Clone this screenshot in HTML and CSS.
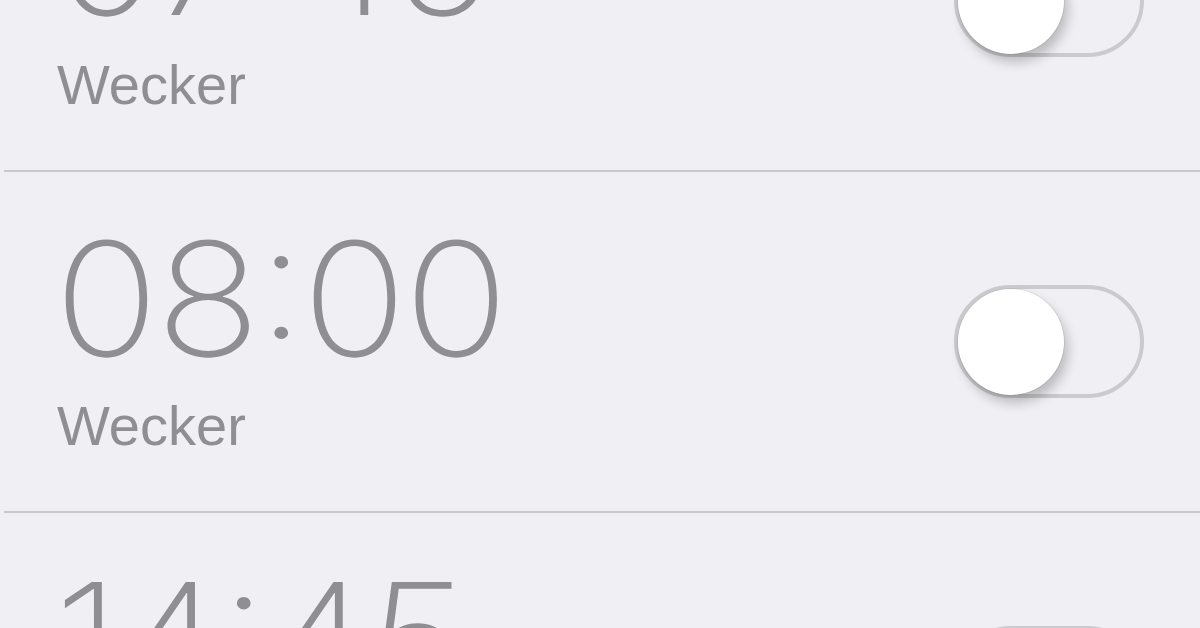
FILE: index.html
```html
<!DOCTYPE html>
<html lang="de">

<head>
    <meta charset="UTF-8">
    <meta name="viewport" content="width=device-width, initial-scale=1.0">
    <title>Wecker</title>
    <link rel="stylesheet" href="styles.css">
</head>

<body>
    <main class="alarms">
        <ul class="alarm-list">
            <li class="alarm">
                <div class="alarm_info">
                    <p class="alarm_time">07<span class="alarm_colon">:</span>45</p>
                    <p class="alarm_label">Wecker</p>
                </div>
                <span class="switch"><span class="switch_knob"></span></span>
            </li>
            <li class="alarm">
                <div class="alarm_info">
                    <p class="alarm_time">08<span class="alarm_colon">:</span>00</p>
                    <p class="alarm_label">Wecker</p>
                </div>
                <span class="switch"><span class="switch_knob"></span></span>
            </li>
            <li class="alarm">
                <div class="alarm_info">
                    <p class="alarm_time">14<span class="alarm_colon">:</span>45</p>
                    <p class="alarm_label">Wecker</p>
                </div>
                <span class="switch"><span class="switch_knob"></span></span>
            </li>
        </ul>
    </main>
</body>

</html>
```

FILE: styles.css
```css
* {
    margin: 0;
    padding: 0;
    box-sizing: border-box;
}

html,
body {
    height: 100%;
}

body {
    overflow: hidden;
    background: #efeff4;
    color: #8e8e93;
    font-family: "Liberation Sans", Arial, sans-serif;
}

/* list is scrolled so the first alarm is cut in half */
.alarm-list {
    list-style: none;
    margin-top: -169px;
}

.alarm {
    display: flex;
    align-items: center;
    justify-content: space-between;
    height: 341px;
    margin-left: 4px;
    padding: 0 56px 0 53px;
    border-bottom: 2px solid #c8c7cc;
}

.alarm_info {
    align-self: flex-start;
    padding-top: 47px;
}

/* thin clock digits, widened a bit */
.alarm_time {
    margin-left: -3px;
    font-family: Inter, "Liberation Sans", sans-serif;
    font-weight: 200;
    font-size: 158px;
    line-height: 160px;
    letter-spacing: -3px;
    transform: scaleX(1.1);
    transform-origin: left center;
}

/* clock colon sits higher than the text one */
.alarm_colon {
    line-height: 0;
    vertical-align: 18px;
}

.alarm_label {
    margin-top: 15px;
    font-size: 56px;
    line-height: 64px;
}

.switch {
    display: flex;
    align-items: center;
    width: 190px;
    height: 113px;
    border: 4px solid #cbcbcf;
    border-radius: 57px;
}

.switch_knob {
    width: 106px;
    height: 106px;
    border-radius: 50%;
    background: #fff;
    box-shadow: 0 0 0 1px rgba(0, 0, 0, 0.06), 4px 8px 12px rgba(0, 0, 0, 0.22);
}
```
